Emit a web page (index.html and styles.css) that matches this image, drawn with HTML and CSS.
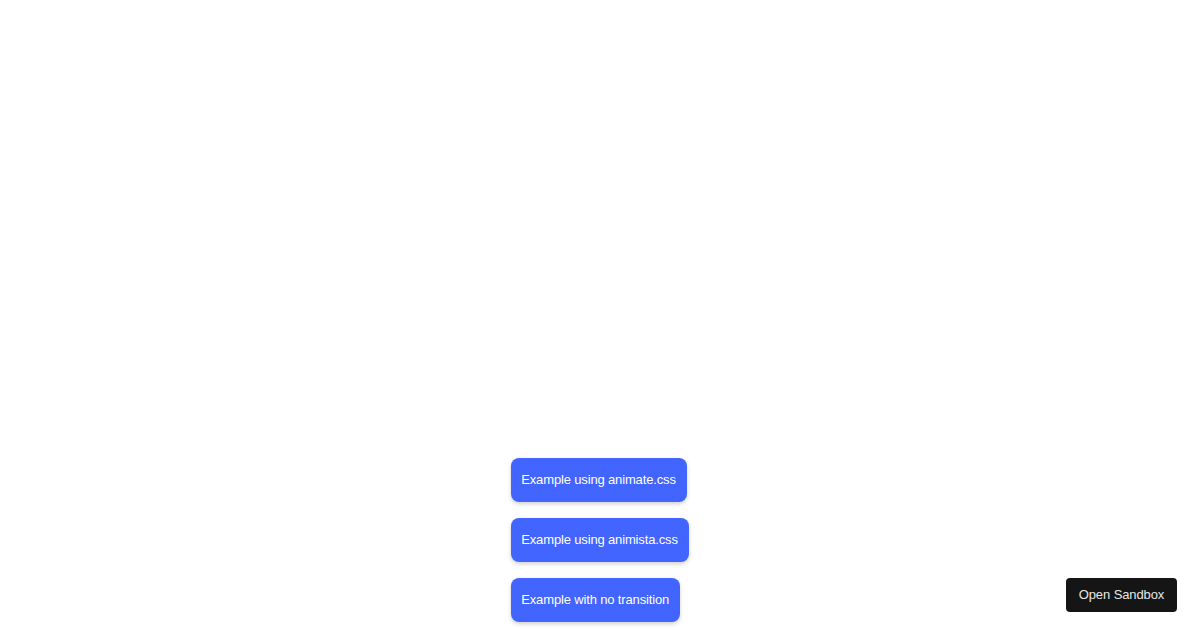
FILE: index.html
```html
<!DOCTYPE html>
<html>
<head>
<meta charset="utf-8">
<link rel="stylesheet" href="styles.css">
</head>
<body>
<main class="page">
  <div class="stack">
    <button class="btn">Example using animate.css</button>
    <button class="btn">Example using animista.css</button>
    <button class="btn">Example with no transition</button>
  </div>
</main>
<a class="sandbox">Open Sandbox</a>
</body>
</html>
```

FILE: styles.css
```css
html, body {
  margin: 0;
  padding: 0;
  height: 100%;
  background: #fff;
}
body {
  font-family: "Liberation Sans", Arial, sans-serif;
}
.page {
  height: 100%;
  display: flex;
  flex-direction: column;
  justify-content: flex-end;
  align-items: center;
  padding-bottom: 8px;
  box-sizing: border-box;
}
.stack {
  display: flex;
  flex-direction: column;
  align-items: flex-start;
  gap: 16px;
}
.btn {
  background: #4264ff;
  color: #fff;
  border: none;
  border-radius: 8px;
  height: 44px;
  padding: 0 11px 2px 10px;
  font-family: "Liberation Sans", Arial, sans-serif;
  font-size: 13px;
  letter-spacing: -0.15px;
  box-shadow: 0 2px 4px rgba(0, 0, 0, 0.18);
  cursor: pointer;
}
.sandbox {
  position: fixed;
  right: 23px;
  bottom: 18px;
  width: 111px;
  height: 34px;
  box-sizing: border-box;
  display: flex;
  align-items: center;
  justify-content: center;
  padding-bottom: 2px;
  background: #151515;
  color: #e6e6e6;
  border-radius: 4px;
  font-size: 13px;
  letter-spacing: -0.1px;
}
```
